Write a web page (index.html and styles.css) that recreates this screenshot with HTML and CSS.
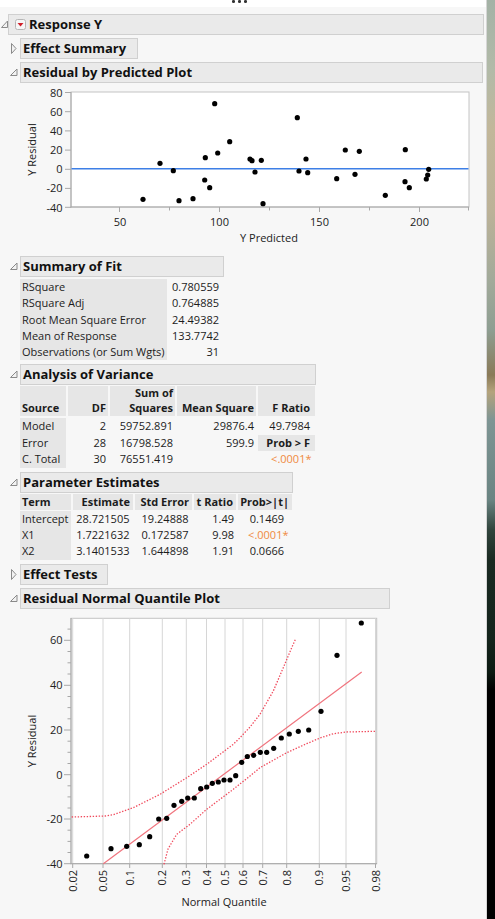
FILE: index.html
```html
<!DOCTYPE html>
<html>
<head>
<meta charset="utf-8">
<link rel="stylesheet" href="styles.css">
</head>
<body>
<div class="window">
  <div class="topbar"><span class="dot"></span><span class="dot"></span><span class="dot"></span></div>

  <div class="node top">
    <div class="node-head">
      <svg class="tog tog-top" width="8" height="21" viewBox="0 0 8 21"><polygon points="1.5,13.5 7.5,13.5 7.5,7" class="tri"/></svg>
      <div class="hbox w-resp"><span class="menu"><svg width="11" height="11" viewBox="0 0 11 11"><rect x="0.5" y="0.5" width="10" height="10" rx="2" class="menu-bg"/><polygon points="2.5,4 8.5,4 5.5,7.5" fill="#d0202a"/></svg></span>Response Y</div>
    </div>
    <div class="body">

      <div class="node">
        <div class="node-head">
          <svg class="tog" width="10" height="21" viewBox="0 0 10 21"><polygon points="1.5,5.5 6,10.5 1.5,15.5" class="tri"/></svg>
          <div class="hbox w-es">Effect Summary</div>
        </div>
      </div>

      <div class="node">
        <div class="node-head">
          <svg class="tog" width="10" height="21" viewBox="0 0 10 21"><polygon points="0.5,13.5 7,13.5 7,7" class="tri"/></svg>
          <div class="hbox w-rp">Residual by Predicted Plot</div>
        </div>
        <div class="body">
          <svg class="plot" width="463" height="170" viewBox="20 83 463 170">
            <rect x="71" y="92" width="398" height="115" fill="#fff" stroke="#c4c4c4" stroke-width="1"/>
            <line x1="71" y1="92" x2="71" y2="207.5" class="axis"/>
            <line x1="70.5" y1="207" x2="469" y2="207" class="axis"/>
            <g class="ticks">
              <line x1="65" y1="92.5" x2="71" y2="92.5"/>
              <line x1="65" y1="111.7" x2="71" y2="111.7"/>
              <line x1="65" y1="130.9" x2="71" y2="130.9"/>
              <line x1="65" y1="150.1" x2="71" y2="150.1"/>
              <line x1="65" y1="169.3" x2="71" y2="169.3"/>
              <line x1="65" y1="188.4" x2="71" y2="188.4"/>
              <line x1="65" y1="207.3" x2="71" y2="207.3"/>
              <line x1="119.5" y1="207" x2="119.5" y2="212"/>
              <line x1="219.5" y1="207" x2="219.5" y2="212"/>
              <line x1="319.5" y1="207" x2="319.5" y2="212"/>
              <line x1="419.5" y1="207" x2="419.5" y2="212"/>
              <line x1="169.5" y1="207" x2="169.5" y2="210.5"/>
              <line x1="269.5" y1="207" x2="269.5" y2="210.5"/>
              <line x1="369.5" y1="207" x2="369.5" y2="210.5"/>
              <line x1="468.5" y1="207" x2="468.5" y2="210.5"/>
            </g>
            <g class="lbl" text-anchor="end">
              <text x="62.5" y="96.5">80</text>
              <text x="62.5" y="115.7">60</text>
              <text x="62.5" y="134.9">40</text>
              <text x="62.5" y="154.1">20</text>
              <text x="62.5" y="173">0</text>
              <text x="62.5" y="192">-20</text>
              <text x="62.5" y="211.5">-40</text>
            </g>
            <g class="lbl" text-anchor="middle">
              <text x="120" y="225.5">50</text>
              <text x="219.5" y="225.5">100</text>
              <text x="319.5" y="225.5">150</text>
              <text x="419.5" y="225.5">200</text>
              <text x="269" y="242.3">Y Predicted</text>
              <text transform="translate(36,149.5) rotate(-90)">Y Residual</text>
            </g>
            <line x1="71.5" y1="168.7" x2="468.5" y2="168.7" stroke="#3d7fe6" stroke-width="1.6"/>
            <g class="pts">
              <circle cx="143" cy="199.3" r="2.6"/><circle cx="160" cy="163.3" r="2.6"/><circle cx="173.3" cy="170.7" r="2.6"/>
              <circle cx="179" cy="200.7" r="2.6"/><circle cx="193" cy="198.7" r="2.6"/><circle cx="204.7" cy="180" r="2.6"/>
              <circle cx="205.3" cy="157.7" r="2.6"/><circle cx="209.7" cy="187.7" r="2.6"/><circle cx="214.7" cy="103.7" r="2.6"/>
              <circle cx="217.7" cy="153" r="2.6"/><circle cx="229.7" cy="141.7" r="2.6"/><circle cx="250" cy="159" r="2.6"/>
              <circle cx="252" cy="160.7" r="2.6"/><circle cx="255" cy="172" r="2.6"/><circle cx="261.3" cy="160.3" r="2.6"/>
              <circle cx="263" cy="203.7" r="2.6"/><circle cx="297.3" cy="117.7" r="2.6"/><circle cx="299" cy="171" r="2.6"/>
              <circle cx="306" cy="159" r="2.6"/><circle cx="307.7" cy="172.7" r="2.6"/><circle cx="336.7" cy="178.7" r="2.6"/>
              <circle cx="345.3" cy="150" r="2.6"/><circle cx="355" cy="174.3" r="2.6"/><circle cx="359.3" cy="151.3" r="2.6"/>
              <circle cx="385.3" cy="195.3" r="2.6"/><circle cx="405.3" cy="149.7" r="2.6"/><circle cx="405" cy="181.7" r="2.6"/>
              <circle cx="409.3" cy="187.7" r="2.6"/><circle cx="426.3" cy="179" r="2.6"/><circle cx="427.7" cy="175" r="2.6"/>
              <circle cx="428.7" cy="169.3" r="2.6"/>
            </g>
          </svg>
        </div>
      </div>

      <div class="node">
        <div class="node-head">
          <svg class="tog" width="10" height="21" viewBox="0 0 10 21"><polygon points="0.5,13.5 7,13.5 7,7" class="tri"/></svg>
          <div class="hbox w-sf">Summary of Fit</div>
        </div>
        <div class="body">
          <div class="fit">
            <div class="lab">RSquare</div><div class="val">0.780559</div>
            <div class="lab">RSquare Adj</div><div class="val">0.764885</div>
            <div class="lab">Root Mean Square Error</div><div class="val">24.49382</div>
            <div class="lab">Mean of Response</div><div class="val">133.7742</div>
            <div class="lab">Observations (or Sum Wgts)</div><div class="val">31</div>
          </div>
        </div>
      </div>

      <div class="node">
        <div class="node-head">
          <svg class="tog" width="10" height="21" viewBox="0 0 10 21"><polygon points="0.5,13.5 7,13.5 7,7" class="tri"/></svg>
          <div class="hbox w-av">Analysis of Variance</div>
        </div>
        <div class="body">
          <div class="anova">
            <div class="th left">Source</div>
            <div class="th">DF</div>
            <div class="th">Sum of<br>Squares</div>
            <div class="th">Mean Square</div>
            <div class="th pr5">F Ratio</div>

            <div class="rl">Model</div><div class="num">2</div><div class="num">59752.891</div><div class="num">29876.4</div><div class="num pr5">49.7984</div>
            <div class="rl">Error</div><div class="num">28</div><div class="num">16798.528</div><div class="num">599.9</div><div class="num th-cell pr5">Prob &gt; F</div>
            <div class="rl">C. Total</div><div class="num">30</div><div class="num">76551.419</div><div class="num"></div><div class="num sig pr3">&lt;.0001*</div>
          </div>
        </div>
      </div>

      <div class="node">
        <div class="node-head">
          <svg class="tog" width="10" height="21" viewBox="0 0 10 21"><polygon points="0.5,13.5 7,13.5 7,7" class="tri"/></svg>
          <div class="hbox w-pe">Parameter Estimates</div>
        </div>
        <div class="body">
          <div class="params">
            <div class="ph left">Term</div><div class="ph">Estimate</div><div class="ph">Std Error</div><div class="ph">t Ratio</div><div class="ph">Prob&gt;|t|</div>
            <div class="rl">Intercept</div><div class="num">28.721505</div><div class="num">19.24888</div><div class="num">1.49</div><div class="num nostar">0.1469</div>
            <div class="rl">X1</div><div class="num">1.7221632</div><div class="num">0.172587</div><div class="num">9.98</div><div class="num sig">&lt;.0001*</div>
            <div class="rl">X2</div><div class="num">3.1401533</div><div class="num">1.644898</div><div class="num">1.91</div><div class="num nostar">0.0666</div>
          </div>
        </div>
      </div>

      <div class="node">
        <div class="node-head">
          <svg class="tog" width="10" height="21" viewBox="0 0 10 21"><polygon points="1.5,5.5 6,10.5 1.5,15.5" class="tri"/></svg>
          <div class="hbox w-et">Effect Tests</div>
        </div>
      </div>

      <div class="node">
        <div class="node-head">
          <svg class="tog" width="10" height="21" viewBox="0 0 10 21"><polygon points="0.5,13.5 7,13.5 7,7" class="tri"/></svg>
          <div class="hbox w-nq">Residual Normal Quantile Plot</div>
        </div>
        <div class="body">
          <svg class="plot" width="463" height="307" viewBox="20 608 463 307">
            <rect x="71" y="617.3" width="305.7" height="245.4" fill="#fff" stroke="#c4c4c4" stroke-width="1"/>
            <g class="grid">
              <line x1="72.7" y1="617.3" x2="72.7" y2="862.7"/>
              <line x1="103" y1="617.3" x2="103" y2="862.7"/>
              <line x1="129.7" y1="617.3" x2="129.7" y2="862.7"/>
              <line x1="162.3" y1="617.3" x2="162.3" y2="862.7"/>
              <line x1="186.3" y1="617.3" x2="186.3" y2="862.7"/>
              <line x1="206.5" y1="617.3" x2="206.5" y2="862.7"/>
              <line x1="225" y1="617.3" x2="225" y2="862.7"/>
              <line x1="243" y1="617.3" x2="243" y2="862.7"/>
              <line x1="262.7" y1="617.3" x2="262.7" y2="862.7"/>
              <line x1="286.7" y1="617.3" x2="286.7" y2="862.7"/>
              <line x1="319.3" y1="617.3" x2="319.3" y2="862.7"/>
              <line x1="346" y1="617.3" x2="346" y2="862.7"/>
              <line x1="375.5" y1="617.3" x2="375.5" y2="862.7"/>
            </g>
            <line x1="71" y1="617" x2="71" y2="863" class="axis"/>
            <line x1="70.5" y1="862.7" x2="377" y2="862.7" class="axis"/>
            <g class="ticks">
              <line x1="64" y1="639.3" x2="71" y2="639.3"/>
              <line x1="64" y1="684.3" x2="71" y2="684.3"/>
              <line x1="64" y1="729" x2="71" y2="729"/>
              <line x1="64" y1="773.7" x2="71" y2="773.7"/>
              <line x1="64" y1="818" x2="71" y2="818"/>
              <line x1="64" y1="862.7" x2="71" y2="862.7"/>
              <line x1="67.5" y1="628.1" x2="71" y2="628.1"/>
              <line x1="67.5" y1="650.5" x2="71" y2="650.5"/>
              <line x1="67.5" y1="661.8" x2="71" y2="661.8"/>
              <line x1="67.5" y1="673" x2="71" y2="673"/>
              <line x1="67.5" y1="695.5" x2="71" y2="695.5"/>
              <line x1="67.5" y1="706.6" x2="71" y2="706.6"/>
              <line x1="67.5" y1="717.8" x2="71" y2="717.8"/>
              <line x1="67.5" y1="740.2" x2="71" y2="740.2"/>
              <line x1="67.5" y1="751.3" x2="71" y2="751.3"/>
              <line x1="67.5" y1="762.5" x2="71" y2="762.5"/>
              <line x1="67.5" y1="784.8" x2="71" y2="784.8"/>
              <line x1="67.5" y1="795.9" x2="71" y2="795.9"/>
              <line x1="67.5" y1="807" x2="71" y2="807"/>
              <line x1="67.5" y1="829.2" x2="71" y2="829.2"/>
              <line x1="67.5" y1="840.4" x2="71" y2="840.4"/>
              <line x1="67.5" y1="851.5" x2="71" y2="851.5"/>
              <line x1="72.7" y1="862.7" x2="72.7" y2="867"/>
              <line x1="103" y1="862.7" x2="103" y2="867"/>
              <line x1="129.7" y1="862.7" x2="129.7" y2="867"/>
              <line x1="162.3" y1="862.7" x2="162.3" y2="867"/>
              <line x1="186.3" y1="862.7" x2="186.3" y2="867"/>
              <line x1="206.5" y1="862.7" x2="206.5" y2="867"/>
              <line x1="225" y1="862.7" x2="225" y2="867"/>
              <line x1="243" y1="862.7" x2="243" y2="867"/>
              <line x1="262.7" y1="862.7" x2="262.7" y2="867"/>
              <line x1="286.7" y1="862.7" x2="286.7" y2="867"/>
              <line x1="319.3" y1="862.7" x2="319.3" y2="867"/>
              <line x1="346" y1="862.7" x2="346" y2="867"/>
              <line x1="375.5" y1="862.7" x2="375.5" y2="867"/>
            </g>
            <g class="lbl" text-anchor="end">
              <text x="62.5" y="643.3">60</text>
              <text x="62.5" y="688.3">40</text>
              <text x="62.5" y="733">20</text>
              <text x="62.5" y="777.7">0</text>
              <text x="62.5" y="822">-20</text>
              <text x="62.5" y="866.7">-40</text>
            </g>
            <g class="lbl" text-anchor="end">
              <text transform="translate(76.7,869) rotate(-90)">0.02</text>
              <text transform="translate(107,869) rotate(-90)">0.05</text>
              <text transform="translate(133.7,869) rotate(-90)">0.1</text>
              <text transform="translate(166.3,869) rotate(-90)">0.2</text>
              <text transform="translate(190.3,869) rotate(-90)">0.3</text>
              <text transform="translate(210.5,869) rotate(-90)">0.4</text>
              <text transform="translate(229,869) rotate(-90)">0.5</text>
              <text transform="translate(247,869) rotate(-90)">0.6</text>
              <text transform="translate(266.7,869) rotate(-90)">0.7</text>
              <text transform="translate(290.7,869) rotate(-90)">0.8</text>
              <text transform="translate(323.3,869) rotate(-90)">0.9</text>
              <text transform="translate(350,869) rotate(-90)">0.95</text>
              <text transform="translate(379.5,869) rotate(-90)">0.98</text>
            </g>
            <g class="lbl" text-anchor="middle">
              <text x="224" y="905">Normal Quantile</text>
              <text transform="translate(36,740) rotate(-90)">Y Residual</text>
            </g>
            <polyline class="band" points="71.7,816 90,815.5 105,815 113.3,813.7 133.3,806.7 160,793.3 186.7,776.7 206.7,763.3 233.3,743.3 240,736.7 250,726 260,713.3 273.3,690 283.3,666.7 291.7,646.7 295.7,637.7"/>
            <polyline class="band" points="164,863.3 168,848 176.7,833.3 190,823.3 206.7,808.3 233.3,788.3 250,775 260,766.7 286.7,751.7 306.7,742.7 320,737 333.3,732.7 346.7,731 376,730.3"/>
            <line x1="103.3" y1="862.7" x2="361.7" y2="671" stroke="#f0747e" stroke-width="1.2"/>
            <g class="pts">
              <circle cx="86.7" cy="855" r="2.6"/><circle cx="111" cy="847.7" r="2.6"/><circle cx="126.7" cy="845.3" r="2.6"/>
              <circle cx="139.3" cy="843.7" r="2.6"/><circle cx="149.7" cy="835.7" r="2.6"/><circle cx="158.7" cy="818" r="2.6"/>
              <circle cx="166.7" cy="817.3" r="2.6"/><circle cx="174" cy="804.3" r="2.6"/><circle cx="181.7" cy="800.3" r="2.6"/>
              <circle cx="187.7" cy="797" r="2.6"/><circle cx="194.3" cy="797" r="2.6"/><circle cx="200.7" cy="787.7" r="2.6"/>
              <circle cx="206.7" cy="786" r="2.6"/><circle cx="212.3" cy="782.3" r="2.6"/><circle cx="218.3" cy="781" r="2.6"/>
              <circle cx="224" cy="779" r="2.6"/><circle cx="230" cy="779" r="2.6"/><circle cx="235.7" cy="774.7" r="2.6"/>
              <circle cx="241.7" cy="761.3" r="2.6"/><circle cx="247.3" cy="755.5" r="2.6"/><circle cx="253.7" cy="754.3" r="2.6"/>
              <circle cx="260.3" cy="751.3" r="2.6"/><circle cx="266.7" cy="751.3" r="2.6"/><circle cx="273.7" cy="747.3" r="2.6"/>
              <circle cx="281.3" cy="737" r="2.6"/><circle cx="289.3" cy="733" r="2.6"/><circle cx="298.3" cy="730.3" r="2.6"/>
              <circle cx="308.7" cy="729" r="2.6"/><circle cx="321" cy="710.3" r="2.6"/><circle cx="337" cy="654.3" r="2.6"/>
              <circle cx="361.3" cy="622" r="2.6"/>
            </g>
          </svg>
        </div>
      </div>

      <div class="node">
        <div class="node-head">
          <svg class="tog" width="10" height="21" viewBox="0 0 10 21"></svg>
          <div class="hbox w-next"></div>
        </div>
      </div>

    </div>
  </div>
</div>
<div class="desktop"></div>
</body>
</html>
```
FILE: styles.css
```css
* { box-sizing: border-box; }
html, body { margin: 0; padding: 0; }
body {
  width: 495px;
  height: 919px;
  overflow: hidden;
  display: flex;
  background: #000;
  font-family: "Open Sans", "Noto Sans", sans-serif;
  color: #1c1c1c;
}
.window {
  width: 487px;
  height: 919px;
  flex: none;
  background: #f7f7f7;
  border-right: 1px solid #d6d6d6;
  overflow: hidden;
}
.desktop {
  flex: 1;
  background: linear-gradient(to bottom,
    #a4b2a6 0px, #b2baa8 70px, #c2b79a 130px, #bcb298 210px, #a2aa9a 280px,
    #8e9e92 330px, #8a7a58 375px, #b4a37c 392px, #7e9594 420px, #6a8482 500px,
    #30443c 530px, #1a2a22 560px, #14241c 640px, #0c1a12 672px, #000 690px, #000 919px);
}
.topbar {
  height: 7px;
  background: #fff;
  display: flex;
  justify-content: center;
  gap: 3.5px;
  padding-right: 7px;
}
.dot {
  width: 2.6px;
  height: 2.6px;
  border-radius: 50%;
  background: #333;
}

.node, .body {
  display: flex;
  flex-direction: column;
  align-items: flex-start;
}
.node.top { margin-top: 7px; }
.body > .node { margin-top: 3px; }
.node-head {
  display: flex;
  align-items: stretch;
  height: 21px;
}
.tog { flex: none; display: block; }
.tri { fill: #f2f2f2; stroke: #8a8a8a; stroke-width: 1; }
.hbox {
  height: 21px;
  border: 1px solid #d0d0d0;
  background: #eaeaea;
  font-weight: 700;
  font-size: 13px;
  line-height: 19px;
  padding-left: 2px;
  white-space: nowrap;
  display: flex;
  align-items: center;
  color: #111;
}
.menu { display: flex; margin: 0 3px 0 4px; }
.menu-bg { fill: #f6f6f6; stroke: #b6b6b6; stroke-width: 1; }

.w-resp { width: 476px; }
.w-es { width: 118px; }
.w-rp { width: 463px; }
.w-sf { width: 204px; }
.w-av { width: 296px; }
.w-pe { width: 273px; }
.w-et { width: 88px; }
.w-nq { width: 370px; }
.w-next { width: 100px; }

.body { margin-left: 10px; }

.plot { display: block; flex: none; }
.plot text { font-family: "Open Sans", "Noto Sans", sans-serif; font-size: 11px; fill: #222; }
.axis { stroke: #a8a8a8; stroke-width: 1; }
.ticks line { stroke: #a8a8a8; stroke-width: 1; }
.grid line { stroke: #d6d6d6; stroke-width: 1; }
.pts circle { fill: #000; }
.band { fill: none; stroke: #f04a5c; stroke-width: 1.3; stroke-dasharray: 1.4 1.6; }

.fit {
  display: grid;
  grid-template-columns: 147px 57px;
  grid-auto-rows: 16.3px;
  margin-top: 2px;
  margin-bottom: 1px;
  font-size: 11px;
  line-height: 16.3px;
}
.lab { background: #e6e6e6; padding-left: 2px; white-space: nowrap; }
.val { text-align: right; padding-right: 5px; }

.anova {
  display: grid;
  grid-template-columns: 46px 40px 65px 79px 57px;
  grid-template-rows: 32px repeat(3, 16.35px);
  column-gap: 2px;
  margin-top: 1px;
  margin-bottom: 1px;
  font-size: 11px;
  line-height: 16.35px;
}
.th {
  background: #e6e6e6;
  font-weight: 700;
  text-align: right;
  padding-right: 2px;
  display: flex;
  flex-direction: column;
  justify-content: flex-end;
  height: 30px;
  line-height: 15.5px;
  padding-bottom: 0.5px;
  white-space: nowrap;
}
.th.left, .ph.left { text-align: left; padding-left: 2px; padding-right: 0; }
.rl { background: #e6e6e6; padding-left: 2px; white-space: nowrap; }
.num { text-align: right; padding-right: 2px; white-space: nowrap; }
.th-cell { background: #e6e6e6; font-weight: 700; }
.pr5 { padding-right: 5px; }
.pr3 { padding-right: 3.5px; }
.sig { color: #f08a3e; }

.params {
  display: grid;
  grid-template-columns: 51px 60px 57px 42px 54px;
  grid-template-rows: 16.5px repeat(3, 16.35px);
  column-gap: 2px;
  margin-top: 1.5px;
  margin-bottom: 1px;
  font-size: 11px;
  line-height: 16.35px;
}
.ph {
  background: #e6e6e6;
  font-weight: 700;
  text-align: right;
  padding-right: 3px;
  height: 16px;
  line-height: 16px;
  white-space: nowrap;
}
.params .num:nth-child(5n+2) { padding-right: 3.5px; }
.params .num:nth-child(5n+3) { padding-right: 3.5px; }
.params .num:nth-child(5n+4) { padding-right: 2px; }
.params .num.sig { padding-right: 3.5px; }
.params .num.nostar { padding-right: 8px; }
```
